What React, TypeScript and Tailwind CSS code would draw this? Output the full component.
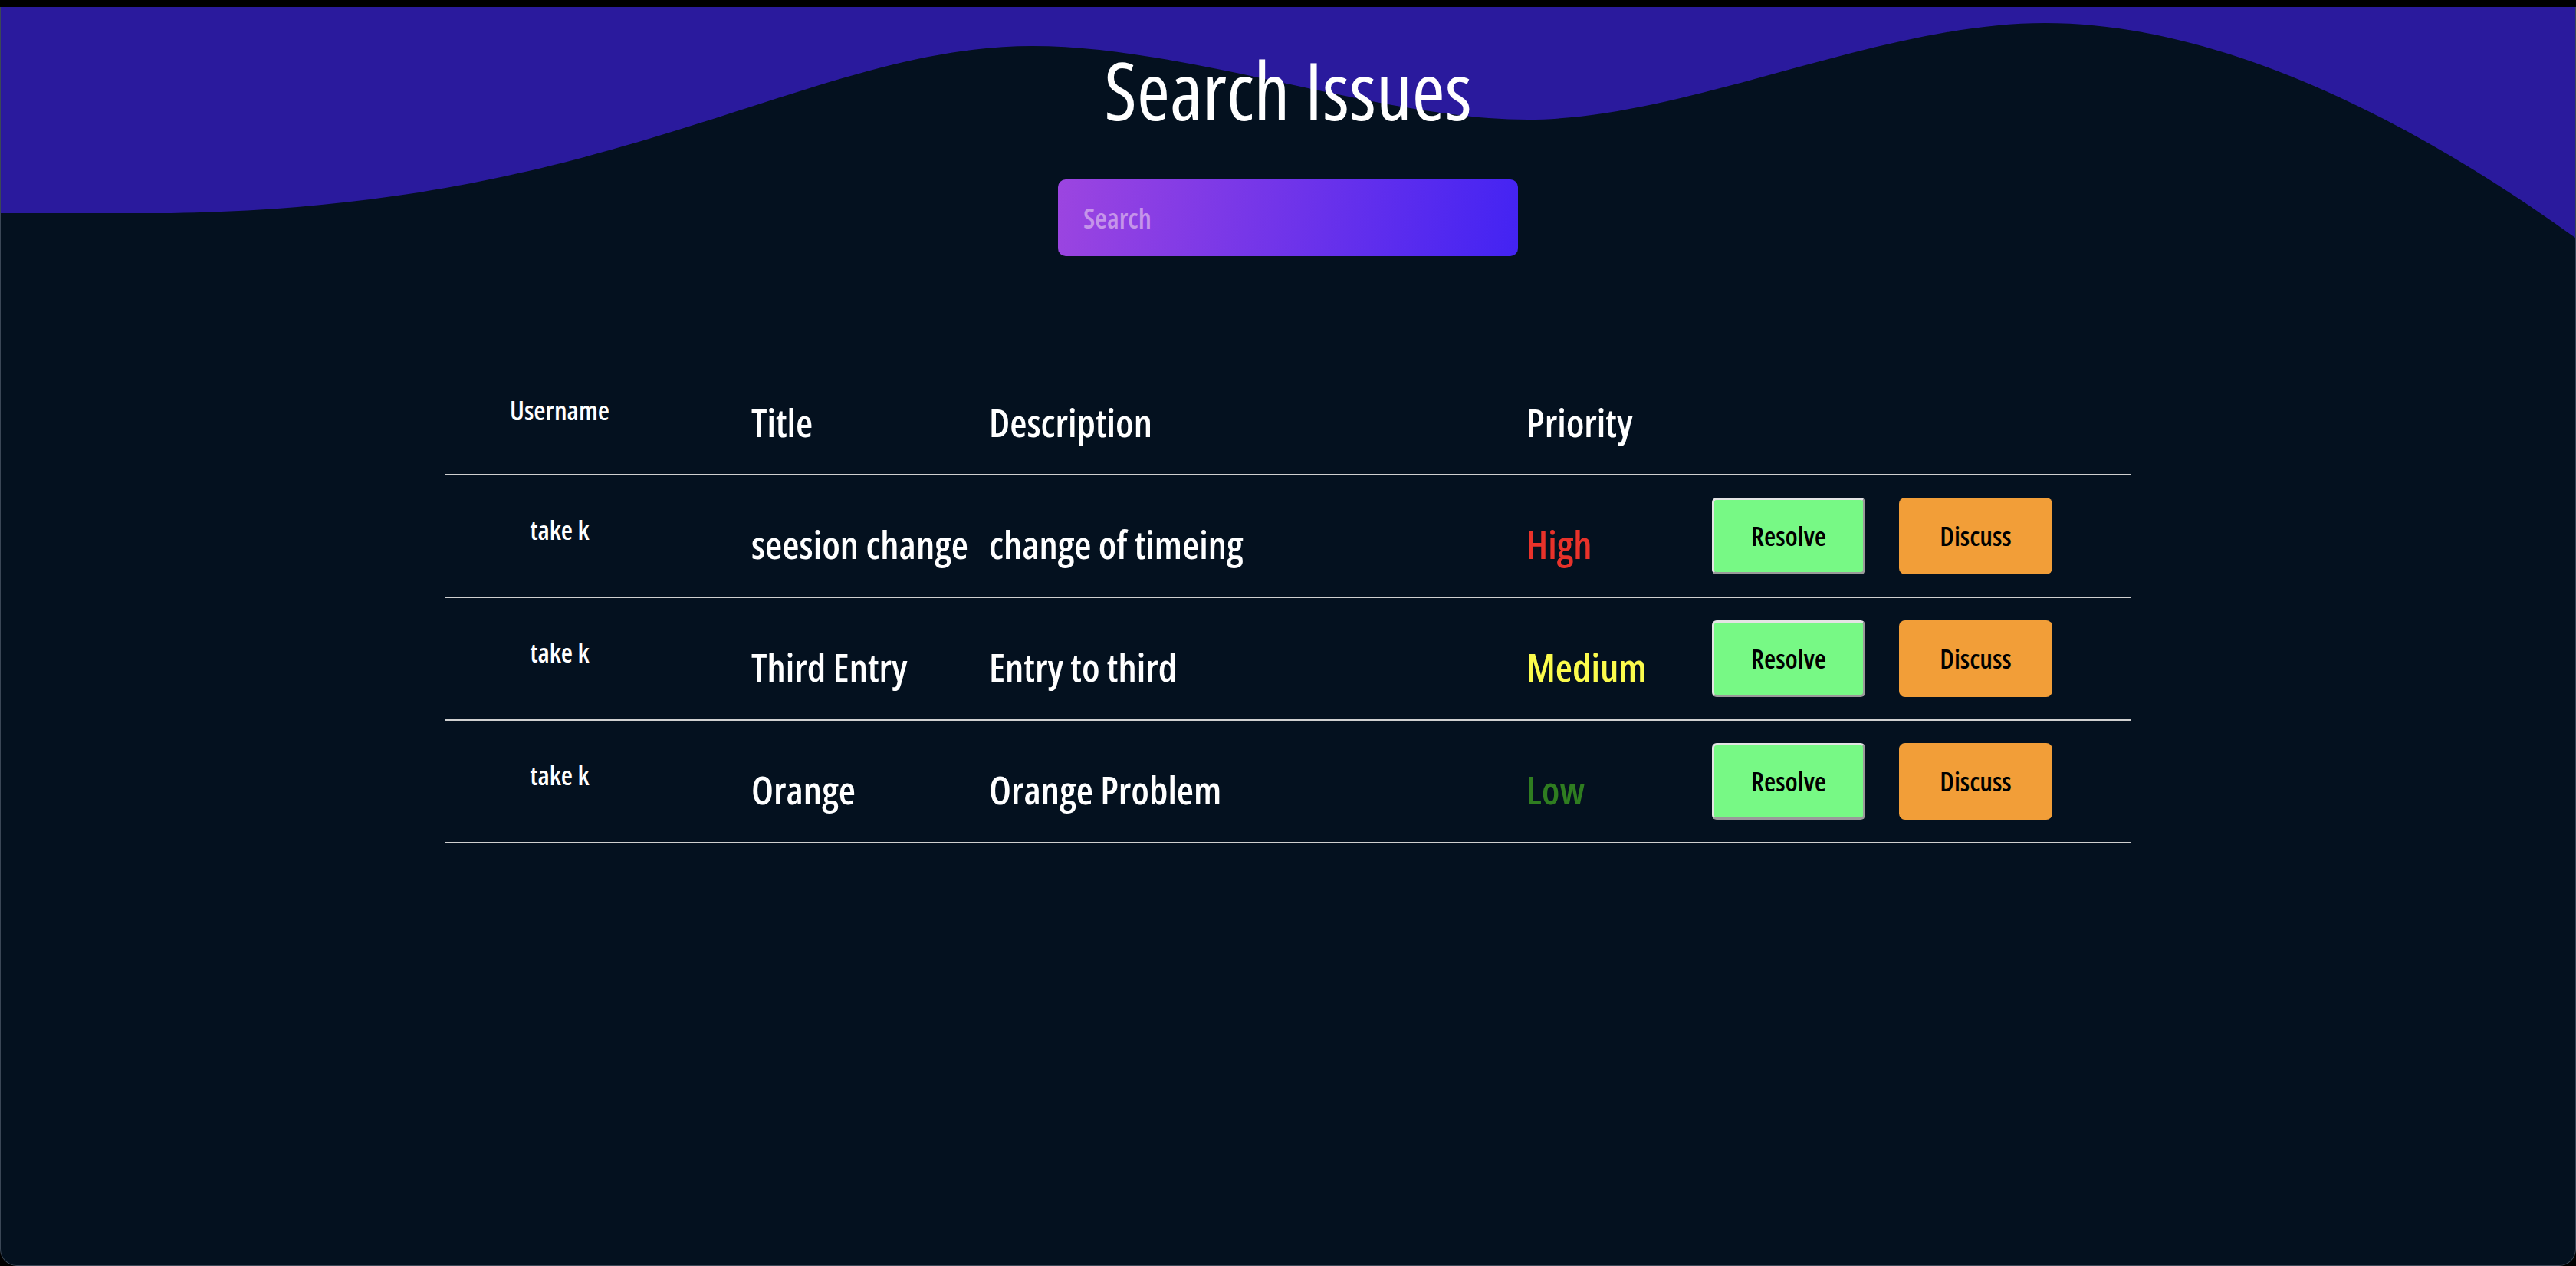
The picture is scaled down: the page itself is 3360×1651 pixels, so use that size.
type Issue = {
  id: number;
  username: string;
  title: string;
  description: string;
  priority: "High" | "Medium" | "Low";
};

const issues: Issue[] = [
  { id: 1, username: "take k", title: "seesion change", description: "change of timeing", priority: "High" },
  { id: 2, username: "take k", title: "Third Entry", description: "Entry to third", priority: "Medium" },
  { id: 3, username: "take k", title: "Orange", description: "Orange Problem", priority: "Low" },
];

const priorityColor: Record<Issue["priority"], string> = {
  High: "text-[#e8322a]",
  Medium: "text-[#fbfb4c]",
  Low: "text-[#2f7d20]",
};

// condensed face, closest thing to the original's display font
const font = "font-['Open_Sans',sans-serif] font-stretch-[75%]";

function Wave() {
  return (
    <svg
      className="absolute left-0 top-0 h-[320px] w-full"
      viewBox="0 0 3360 320"
      preserveAspectRatio="none"
    >
      <path
        fill="#2a1a9d"
        d="M0,269 L190,269 C800,269 1050,51 1346,51 C1550,51 1800,147 1993,147 C2200,147 2450,21 2668,21 C2900,21 3150,150 3360,301 L3360,0 L0,0 Z"
      />
    </svg>
  );
}

export default function App() {
  return (
    <div className={`min-h-screen bg-black pt-[9px] ${font}`}>
      <div className="relative min-h-[1642px] overflow-hidden rounded-b-[22px] border-x border-b border-[#3b4756] bg-[#04111f]">
        <Wave />
        <div className="relative flex flex-col items-center">
          <h1 className="pt-[56px] text-[104px] font-medium leading-none text-white">Search Issues</h1>
          <input
            className="mt-[65px] h-[100px] w-[600px] rounded-[10px] bg-[linear-gradient(100deg,#9c45e0,#4323f3)] px-[33px] text-[36px] font-semibold text-white outline-none placeholder:text-[#c594ea]"
            placeholder="Search"
          />

          <div className="mt-[126px] w-[2200px]">
            <div className="grid h-[160px] grid-cols-[300px_410px_701px_242px_1fr] items-start border-b-2 border-[#d0d0d0] font-semibold text-white">
              <div className="mt-[57px] text-center text-[35px] leading-none">Username</div>
              <div className="mt-[65px] pl-[100px] text-[51px] leading-none">Title</div>
              <div className="mt-[65px] text-[51px] leading-none">Description</div>
              <div className="mt-[65px] text-[51px] leading-none">Priority</div>
              <div />
            </div>

            {issues.map((issue) => (
              <div
                key={issue.id}
                className="grid h-[160px] grid-cols-[300px_410px_701px_242px_1fr] items-start border-b-2 border-[#d0d0d0] font-semibold text-white"
              >
                <div className="mt-[53px] text-center text-[35px] leading-none">{issue.username}</div>
                <div className="mt-[64px] whitespace-nowrap pl-[100px] text-[51px] leading-none">{issue.title}</div>
                <div className="mt-[64px] text-[51px] leading-none">{issue.description}</div>
                <div className={`mt-[64px] text-[51px] leading-none ${priorityColor[issue.priority]}`}>
                  {issue.priority}
                </div>
                <div className="mt-[29px] flex gap-[44px]">
                  <button className="h-[100px] w-[200px] rounded-[6px] border-[3px] border-t-[#e4e4e4] border-l-[#e4e4e4] border-r-[#9a9a9a] border-b-[#9a9a9a] bg-[#77f985] text-[35px] font-semibold text-black">
                    Resolve
                  </button>
                  <button className="h-[100px] w-[200px] rounded-[8px] bg-[#f29e38] text-[35px] font-semibold text-black">
                    Discuss
                  </button>
                </div>
              </div>
            ))}
          </div>
        </div>
      </div>
    </div>
  );
}
